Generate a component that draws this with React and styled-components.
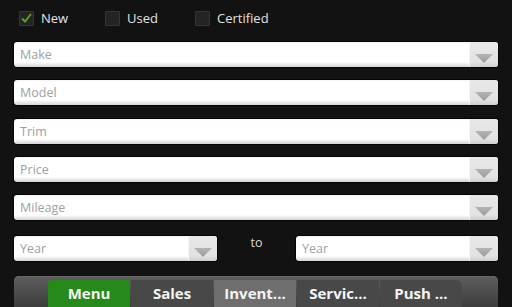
import React from "react";
import styled, { createGlobalStyle } from "styled-components";

const GlobalStyle = createGlobalStyle`
  html, body {
    margin: 0;
    padding: 0;
    background: #121212;
    overflow: hidden;
  }
  body {
    font-family: "Open Sans", "Noto Sans", sans-serif;
  }
`;

const Screen = styled.div`
  width: 512px;
  height: 307px;
  background: #121212;
  padding: 0 14px;
  box-sizing: border-box;
  overflow: hidden;
`;

const CheckRow = styled.div`
  display: flex;
  align-items: center;
  height: 36px;
  padding-left: 5px;
`;

const CheckItem = styled.label`
  display: flex;
  align-items: center;
  gap: 7px;
  width: ${(p) => p.$width || "auto"};
  color: #e2e2e2;
  font-size: 13px;
`;

const Box = styled.span`
  width: 15px;
  height: 15px;
  box-sizing: border-box;
  background: #242424;
  border: 1px solid #363636;
  border-radius: 1px;
  display: flex;
  align-items: center;
  justify-content: center;
`;

const Fields = styled.div`
  display: flex;
  flex-direction: column;
  gap: 13.25px;
  padding-top: 6px;
`;

const Select = styled.div`
  display: flex;
  height: 25px;
  width: ${(p) => p.$width || "100%"};
  box-sizing: border-box;
  border-radius: 3px;
  background: linear-gradient(#f4f4f4 0, #ffffff 2px, #ffffff 20px, #d4d4d4 25px);
  box-shadow: 0 0 0 1px #050505;
  overflow: hidden;
`;

const Placeholder = styled.div`
  flex: 1;
  display: flex;
  align-items: center;
  padding-left: 6px;
  color: #a0a0a0;
  font-size: 12.5px;
`;

const Arrow = styled.div`
  width: 29px;
  border-left: 1px solid #f6f6f6;
  background: linear-gradient(#e8e8e8, #e2e2e2 80%, #cfcfcf);
  display: flex;
  justify-content: center;
  align-items: flex-start;
  padding-top: 12px;
  box-sizing: border-box;
`;

const YearRow = styled.div`
  display: flex;
  align-items: flex-start;
  margin-top: 16px;
`;

const To = styled.div`
  width: 79px;
  text-align: center;
  color: #dcdcdc;
  font-size: 12.5px;
  line-height: 12px;
  padding-top: 1px;
`;

const TabBar = styled.div`
  margin-top: 15px;
  height: 40px;
  border-radius: 5px 5px 0 0;
  background: linear-gradient(#5e5e5e, #3e3e3e 30px);
  box-shadow: inset 0 1px 0 #6a6a6a;
  display: flex;
  align-items: flex-start;
  padding: 4px 0 0 34px;
  box-sizing: border-box;
  gap: 1px;
`;

const Tab = styled.div`
  width: 82px;
  height: 36px;
  display: flex;
  justify-content: center;
  padding-top: 3px;
  box-sizing: border-box;
  color: #f4f4f4;
  font-weight: 700;
  font-size: 15px;
  border-radius: ${(p) => p.$radius || "0"};
  background: ${(p) =>
    p.$active ? "#268a1a" : p.$current ? "#6e6e6e" : "#484848"};
`;

const Triangle = () => (
  <svg width="18" height="9" viewBox="0 0 18 9">
    <defs>
      <linearGradient id="tri" x1="0" y1="0" x2="0" y2="1">
        <stop offset="0" stopColor="#b4b4b4" />
        <stop offset="1" stopColor="#9a9a9a" />
      </linearGradient>
    </defs>
    <path d="M0 0 H18 L9 9 Z" fill="url(#tri)" />
  </svg>
);

const Check = () => (
  <svg width="11" height="10" viewBox="0 0 11 10">
    <path d="M1 5.5 L4 8.5 L10 1" fill="none" stroke="#5b9e2a" strokeWidth="2" />
  </svg>
);

function Dropdown({ label, width }) {
  return (
    <Select $width={width}>
      <Placeholder>{label}</Placeholder>
      <Arrow>
        <Triangle />
      </Arrow>
    </Select>
  );
}

export default function App() {
  return (
    <Screen>
      <GlobalStyle />
      <CheckRow>
        <CheckItem $width="86px">
          <Box>
            <Check />
          </Box>
          New
        </CheckItem>
        <CheckItem $width="90px">
          <Box />
          Used
        </CheckItem>
        <CheckItem>
          <Box />
          Certified
        </CheckItem>
      </CheckRow>
      <Fields>
        <Dropdown label="Make" />
        <Dropdown label="Model" />
        <Dropdown label="Trim" />
        <Dropdown label="Price" />
        <Dropdown label="Mileage" />
      </Fields>
      <YearRow>
        <Dropdown label="Year" width="203px" />
        <To>to</To>
        <Dropdown label="Year" width="202px" />
      </YearRow>
      <TabBar>
        <Tab $active $radius="4px 0 0 0">Menu</Tab>
        <Tab>Sales</Tab>
        <Tab $current>Invent...</Tab>
        <Tab>Servic...</Tab>
        <Tab $radius="0 6px 0 0">Push ...</Tab>
      </TabBar>
    </Screen>
  );
}
